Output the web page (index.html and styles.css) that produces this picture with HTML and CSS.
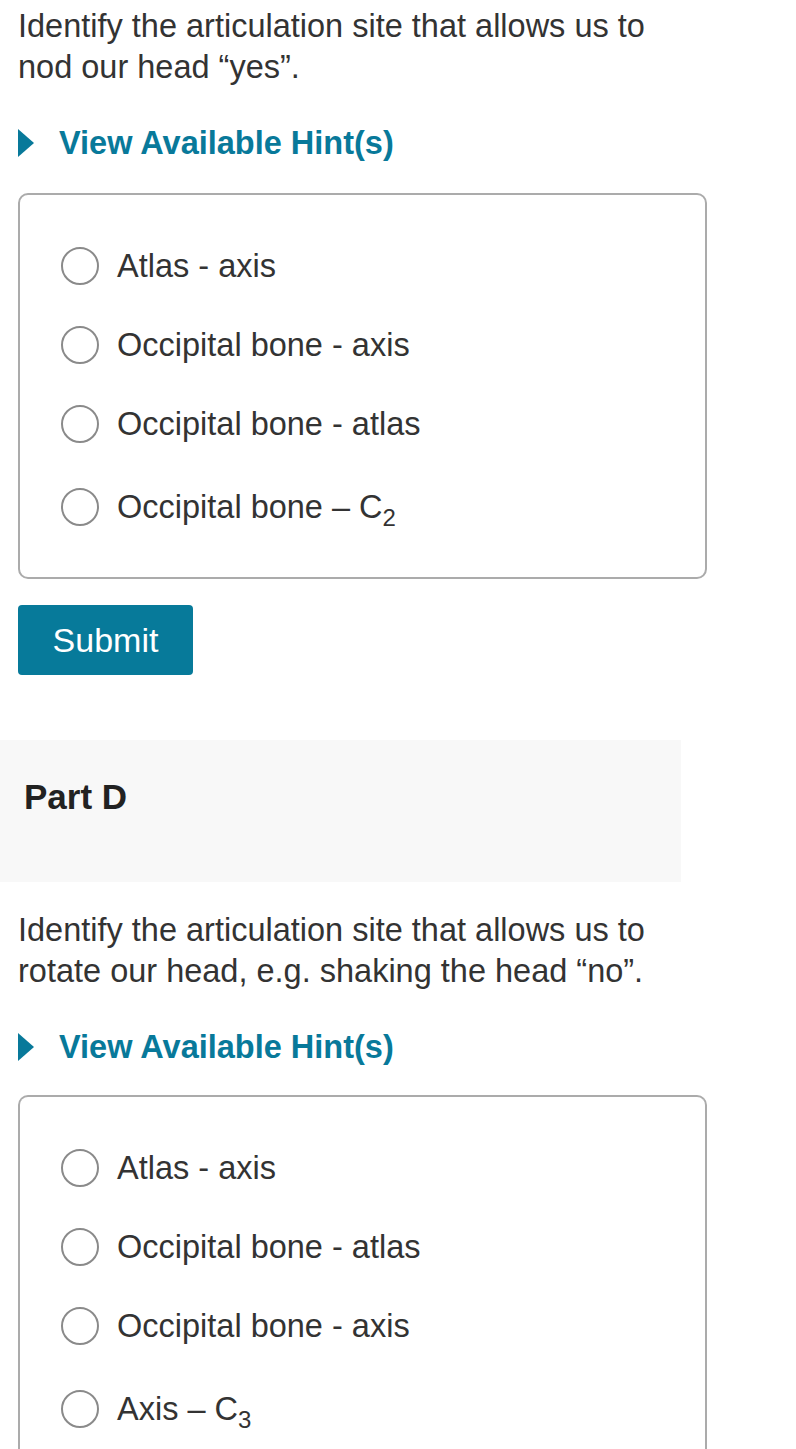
FILE: index.html
```html
<!DOCTYPE html>
<html>
<head>
<meta charset="utf-8">
<link rel="stylesheet" href="styles.css">
</head>
<body>
<div class="page">
  <p class="question">Identify the articulation site that allows us to nod our head “yes”.</p>
  <div class="hint">
    <svg class="hint-arrow" width="16" height="28" viewBox="0 0 16 28"><path d="M0 0 L16 14 L0 28 Z" fill="#08799a"/></svg>
    <span class="hint-text">View Available Hint(s)</span>
  </div>
  <div class="choices">
    <label class="choice"><span class="radio"></span><span class="opt">Atlas - axis</span></label>
    <label class="choice"><span class="radio"></span><span class="opt">Occipital bone - axis</span></label>
    <label class="choice"><span class="radio"></span><span class="opt">Occipital bone - atlas</span></label>
    <label class="choice choice-sub"><span class="radio"></span><span class="opt">Occipital bone – C<sub>2</sub></span></label>
  </div>
  <button class="submit">Submit</button>

  <div class="part-banner"><h2 class="part-title">Part D</h2></div>

  <p class="question">Identify the articulation site that allows us to rotate our head, e.g. shaking the head “no”.</p>
  <div class="hint">
    <svg class="hint-arrow" width="16" height="28" viewBox="0 0 16 28"><path d="M0 0 L16 14 L0 28 Z" fill="#08799a"/></svg>
    <span class="hint-text">View Available Hint(s)</span>
  </div>
  <div class="choices choices-open">
    <label class="choice"><span class="radio"></span><span class="opt">Atlas - axis</span></label>
    <label class="choice"><span class="radio"></span><span class="opt">Occipital bone - atlas</span></label>
    <label class="choice"><span class="radio"></span><span class="opt">Occipital bone - axis</span></label>
    <label class="choice choice-sub"><span class="radio"></span><span class="opt">Axis – C<sub>3</sub></span></label>
  </div>
</div>
</body>
</html>
```

FILE: styles.css
```css
html, body {
  margin: 0;
  padding: 0;
  background: #fff;
}
body {
  font-family: "Liberation Sans", Arial, Helvetica, sans-serif;
  color: #333;
}
.page {
  padding: 6px 0 0 18px;
  width: 690px;
}
.question {
  margin: 0;
  font-size: 32.5px;
  line-height: 41px;
  width: 670px;
}
.hint {
  display: flex;
  align-items: center;
  gap: 25px;
  margin-top: 40px;
  height: 30px;
}
.hint-arrow {
  display: block;
}
.hint-text {
  font-size: 32.5px;
  font-weight: bold;
  color: #08799a;
}
.choices {
  margin-top: 35px;
  border: 2px solid #ababab;
  border-radius: 10px;
  padding: 51px 0 50px 41px;
  width: 644px;
  display: flex;
  flex-direction: column;
  gap: 39px;
}
.choices-open {
  margin-top: 33px;
  border-bottom: none;
  border-bottom-left-radius: 0;
  border-bottom-right-radius: 0;
}
.choice {
  display: flex;
  align-items: center;
  gap: 18px;
  height: 40px;
}
.choice-sub {
  margin-top: 4px;
}
.radio {
  width: 34px;
  height: 34px;
  border: 2.5px solid #8a8a8a;
  border-radius: 50%;
  flex: none;
}
.opt {
  font-size: 32.5px;
  line-height: 40px;
}
.opt sub {
  font-size: 24px;
  line-height: 0;
  vertical-align: -8px;
}
.submit {
  display: block;
  margin-top: 26px;
  width: 175px;
  height: 70px;
  background: #077a9a;
  color: #fff;
  border: none;
  border-radius: 4px;
  font-family: "Liberation Sans", Arial, sans-serif;
  font-size: 34px;
  padding: 0;
}
.part-banner {
  margin: 65px 0 0 -18px;
  width: 681px;
  height: 142px;
  background: #f8f8f8;
  display: flex;
  align-items: center;
}
.part-title {
  margin: 0 0 28px 24px;
  font-size: 35px;
  font-weight: bold;
  color: #222;
}
.part-banner + .question {
  margin-top: 28px;
}
```
